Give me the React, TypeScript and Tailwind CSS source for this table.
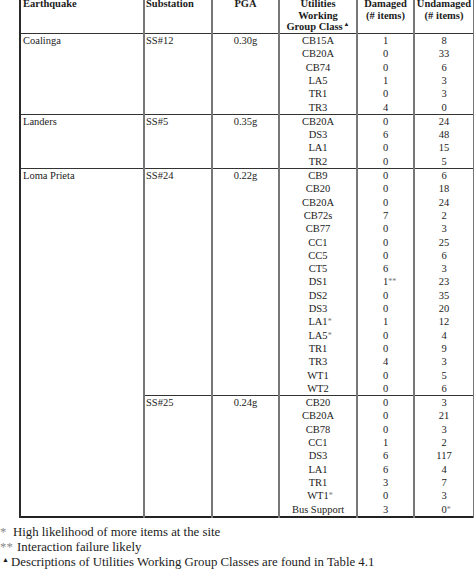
import React from "react"

type Item = { cls: string; clsMark?: string; dmg: string; dmgMark?: string; und: string; undMark?: string }

interface Group {
    quake?: string
    span?: number
    station: string
    pga: string
    items: Item[]
}

const it = (cls: string, dmg: string, und: string, marks: Partial<Item> = {}): Item => ({ cls, dmg, und, ...marks })

const groups: Group[] = [
    {
        quake: "Coalinga",
        span: 1,
        station: "SS#12",
        pga: "0.30g",
        items: [it("CB15A", "1", "8"), it("CB20A", "0", "33"), it("CB74", "0", "6"), it("LA5", "1", "3"), it("TR1", "0", "3"), it("TR3", "4", "0")],
    },
    {
        quake: "Landers",
        span: 1,
        station: "SS#5",
        pga: "0.35g",
        items: [it("CB20A", "0", "24"), it("DS3", "6", "48"), it("LA1", "0", "15"), it("TR2", "0", "5")],
    },
    {
        quake: "Loma Prieta",
        span: 2,
        station: "SS#24",
        pga: "0.22g",
        items: [
            it("CB9", "0", "6"),
            it("CB20", "0", "18"),
            it("CB20A", "0", "24"),
            it("CB72s", "7", "2"),
            it("CB77", "0", "3"),
            it("CC1", "0", "25"),
            it("CC5", "0", "6"),
            it("CT5", "6", "3"),
            it("DS1", "1", "23", { dmgMark: "**" }),
            it("DS2", "0", "35"),
            it("DS3", "0", "20"),
            it("LA1", "1", "12", { clsMark: "*" }),
            it("LA5", "0", "4", { clsMark: "*" }),
            it("TR1", "0", "9"),
            it("TR3", "4", "3"),
            it("WT1", "0", "5"),
            it("WT2", "0", "6"),
        ],
    },
    {
        station: "SS#25",
        pga: "0.24g",
        items: [
            it("CB20", "0", "3"),
            it("CB20A", "0", "21"),
            it("CB78", "0", "3"),
            it("CC1", "1", "2"),
            it("DS3", "6", "117"),
            it("LA1", "6", "4"),
            it("TR1", "3", "7"),
            it("WT1", "0", "3", { clsMark: "*" }),
            it("Bus Support", "3", "0", { undMark: "*" }),
        ],
    },
]

function Cell({ text, mark }: { text: string; mark?: string }) {
    return (
        <div className="text-center">
            <span className="relative">
                {text}
                {mark && <span className="absolute left-full top-[1px] text-[8px] leading-[10px] text-[#777]">{mark}</span>}
            </span>
        </div>
    )
}

const td = "align-top p-0 border-t border-t-[#333] border-r-2 border-r-[#777]"
const th = "align-top p-0 pt-[3px] font-bold border-r-2 border-r-[#777] leading-[11.7px]"

export default function App() {
    return (
        <div
            className="w-[474px] h-[570px] overflow-hidden bg-white text-[#1c1c1c]"
            style={{ fontFamily: '"Liberation Serif", "Times New Roman", serif' }}
        >
            <div className="-mt-[5px] pl-[19px]">
                <table className="table-fixed border-collapse w-[454px] text-[10.5px] leading-[13.3px]">
                    <colgroup>
                        <col className="w-[124px]" />
                        <col className="w-[68px]" />
                        <col className="w-[67px]" />
                        <col className="w-[78px]" />
                        <col className="w-[57px]" />
                        <col className="w-[60px]" />
                    </colgroup>
                    <thead>
                        <tr className="h-[38px]">
                            <th className={`${th} text-left pl-[2px] border-l-2 border-l-[#2a2a2a]`}>Earthquake</th>
                            <th className={`${th} text-left pl-[1px]`}>Substation</th>
                            <th className={`${th} text-center`}>PGA</th>
                            <th className={`${th} text-center`}>
                                Utilities
                                <br />
                                Working
                                <br />
                                Group Class
                                <span className="relative -top-[4px] ml-[1px] text-[6px] leading-[0px]">▲</span>
                            </th>
                            <th className={`${th} text-center`}>
                                Damaged
                                <br />
                                (# items)
                            </th>
                            <th className={`${th} text-center`}>
                                Undamaged
                                <br />
                                (# items)
                            </th>
                        </tr>
                    </thead>
                    <tbody className="border-b-2 border-b-[#222]">
                        {groups.map((g) => (
                            <tr key={g.station}>
                                {g.quake && (
                                    <td rowSpan={g.span} className={`${td} pl-[2px] border-l-2 border-l-[#2a2a2a]`}>
                                        {g.quake}
                                    </td>
                                )}
                                <td className={`${td} pl-[1px]`}>{g.station}</td>
                                <td className={`${td} text-center`}>{g.pga}</td>
                                <td className={td}>
                                    {g.items.map((i, k) => (
                                        <Cell key={k} text={i.cls} mark={i.clsMark} />
                                    ))}
                                </td>
                                <td className={td}>
                                    {g.items.map((i, k) => (
                                        <Cell key={k} text={i.dmg} mark={i.dmgMark} />
                                    ))}
                                </td>
                                <td className={td}>
                                    {g.items.map((i, k) => (
                                        <Cell key={k} text={i.und} mark={i.undMark} />
                                    ))}
                                </td>
                            </tr>
                        ))}
                    </tbody>
                </table>
            </div>

            <div className="mt-[7px] text-[12.8px] leading-[15px]">
                <div className="flex">
                    <span className="w-[13px] text-[#888]">*</span>
                    <span>High likelihood of more items at the site</span>
                </div>
                <div className="flex">
                    <span className="w-[17px] text-[#888]">**</span>
                    <span>Interaction failure likely</span>
                </div>
                <div className="flex items-start">
                    <span className="w-[11px] pl-[2px] text-[7px] leading-[10px]">▲</span>
                    <span>Descriptions of Utilities Working Group Classes are found in Table 4.1</span>
                </div>
            </div>
        </div>
    )
}
